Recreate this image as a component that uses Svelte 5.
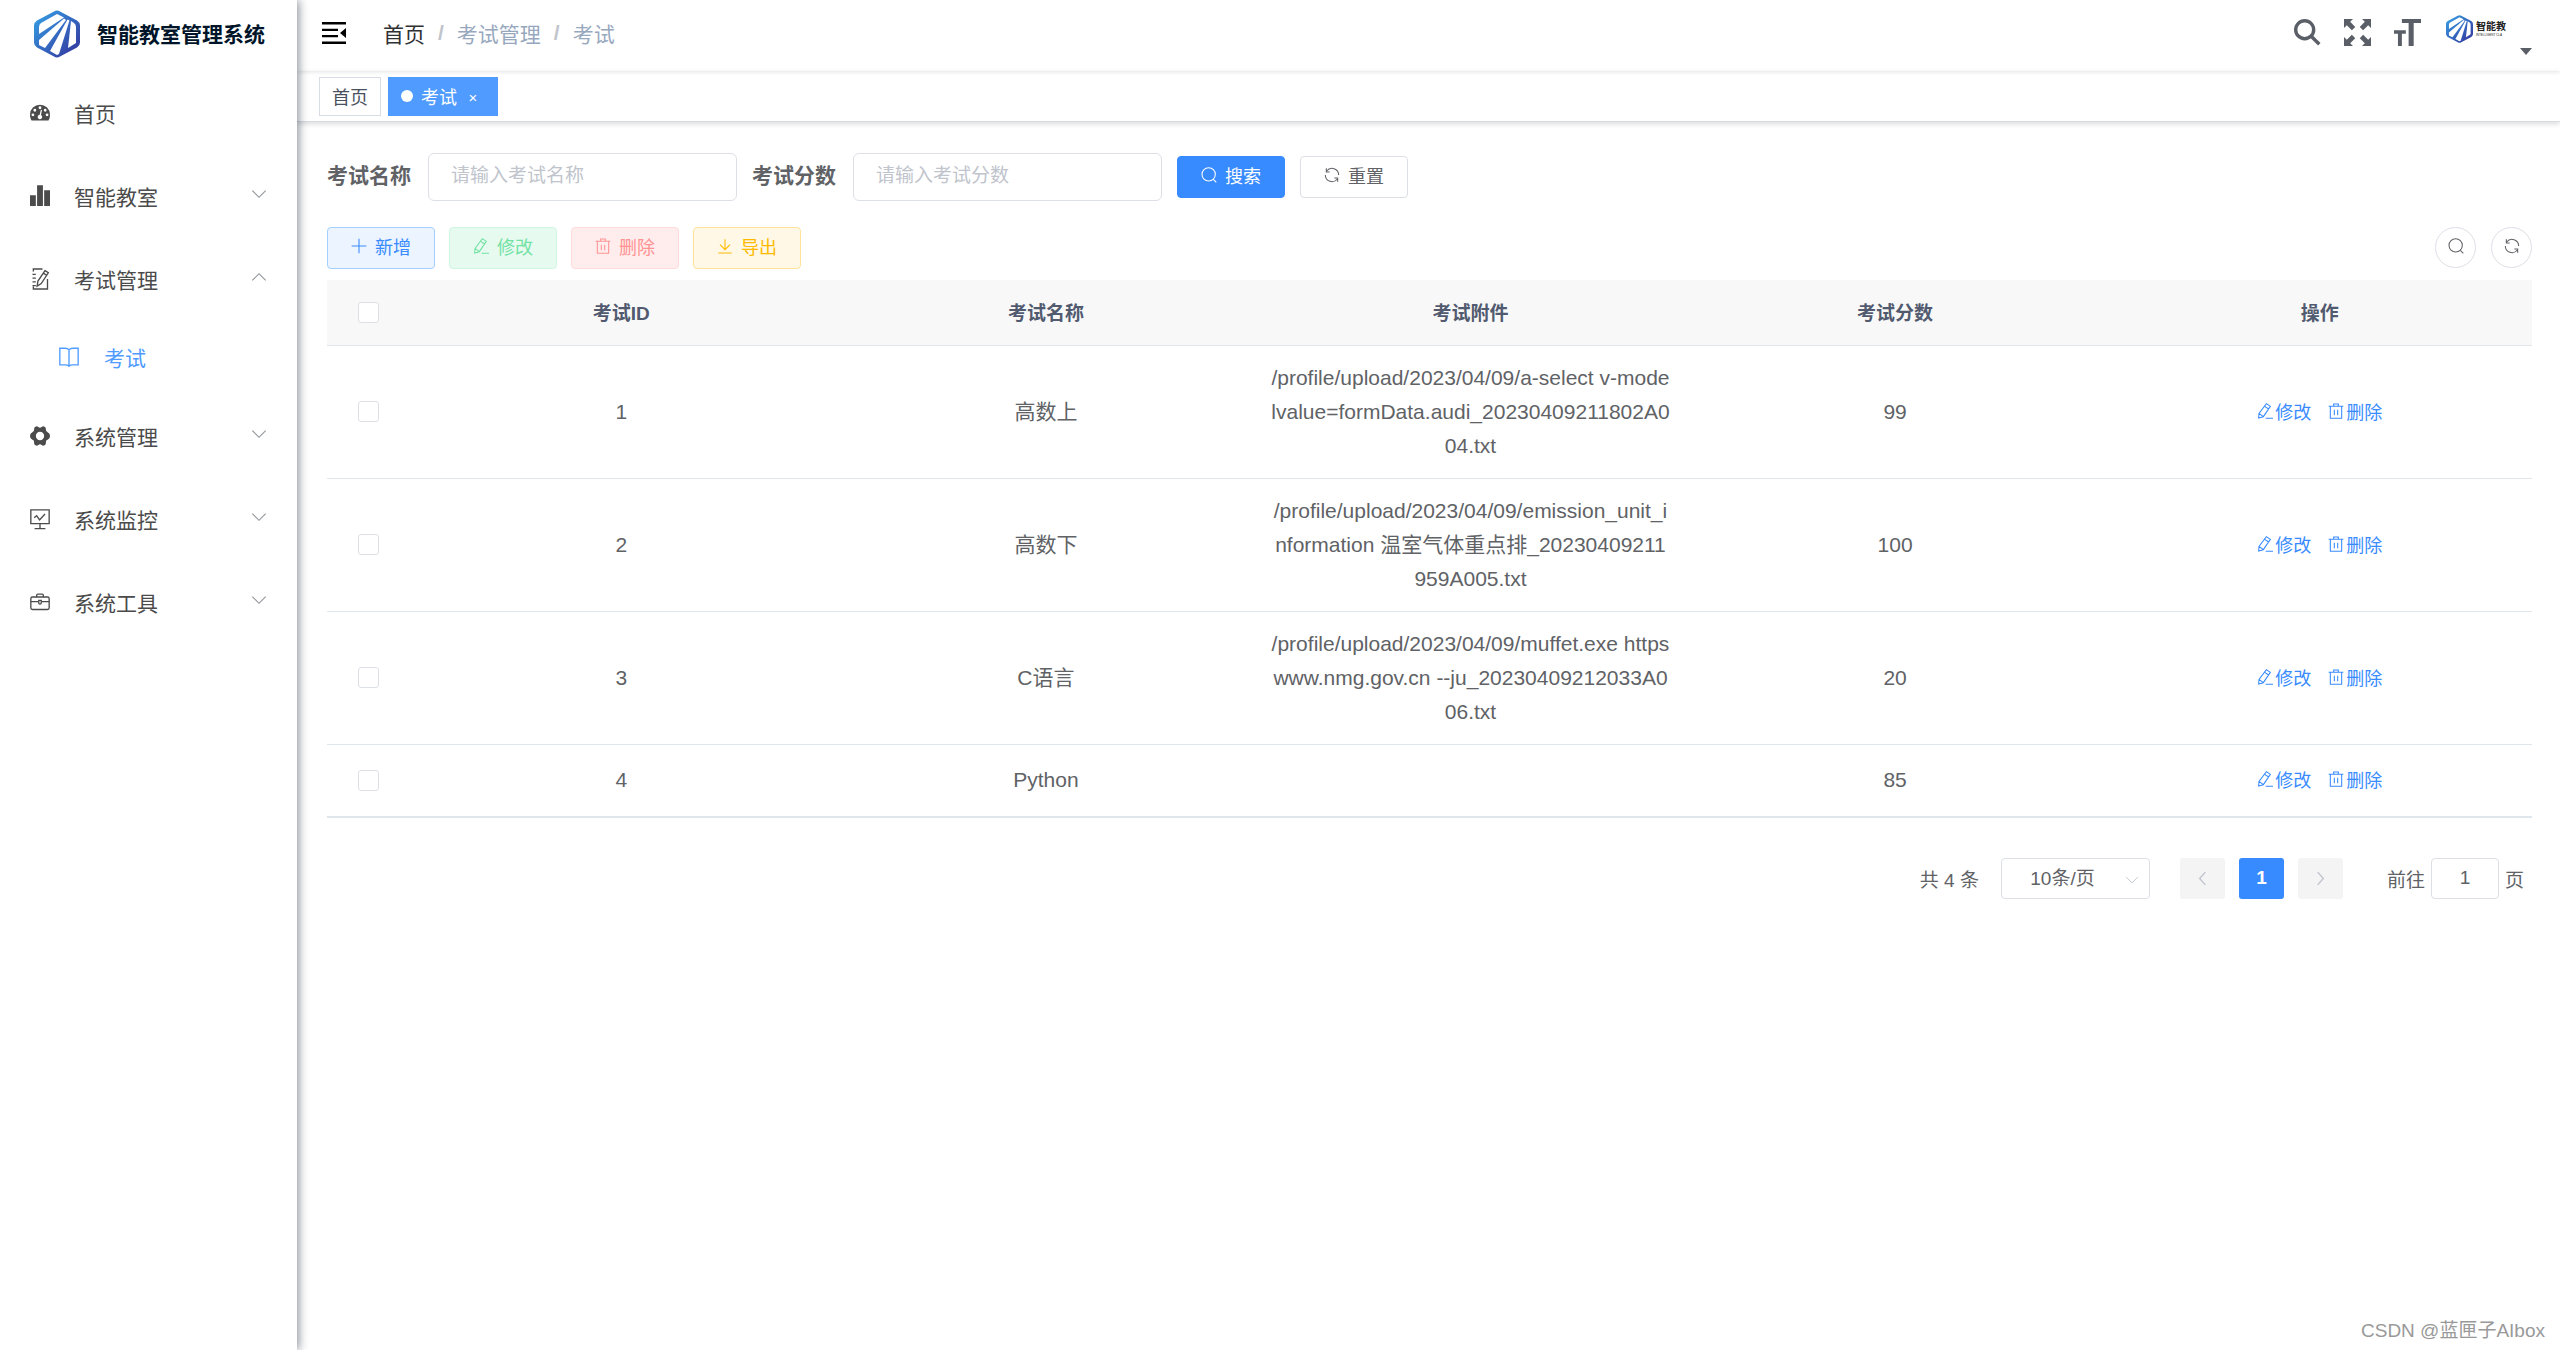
<script>
	const menus = [
		{ label: '首页', icon: 'dashboard' },
		{ label: '智能教室', icon: 'chart', arrow: 'down' },
		{ label: '考试管理', icon: 'note', arrow: 'up', children: [{ label: '考试', icon: 'book' }] },
		{ label: '系统管理', icon: 'gear', arrow: 'down' },
		{ label: '系统监控', icon: 'monitor', arrow: 'down' },
		{ label: '系统工具', icon: 'toolbox', arrow: 'down' }
	];

	const exams = [
		{
			id: 1,
			name: '高数上',
			file: '/profile/upload/2023/04/09/a-select v-modelvalue=formData.audi_20230409211802A004.txt',
			score: 99
		},
		{
			id: 2,
			name: '高数下',
			file: '/profile/upload/2023/04/09/emission_unit_information 温室气体重点排_20230409211959A005.txt',
			score: 100
		},
		{
			id: 3,
			name: 'C语言',
			file: '/profile/upload/2023/04/09/muffet.exe httpswww.nmg.gov.cn --ju_20230409212033A006.txt',
			score: 20
		},
		{ id: 4, name: 'Python', file: '', score: 85 }
	];

	let query = $state({ name: '', score: '' });
	let selected = $state([]);
	let page = $state('1');

	function toggleAll(e) {
		selected = e.currentTarget.checked ? exams.map((exam) => exam.id) : [];
	}

	function reset() {
		query.name = '';
		query.score = '';
	}
</script>

{#snippet icon(name)}
	<svg class="icon {name}" viewBox="0 0 24 24" aria-hidden="true">
		{#if name === 'dashboard'}
			<path
				class="solid"
				fill-rule="evenodd"
				d="M12 2A12 12 0 0 0 0 14c0 2.500.700 5 1.800 7h20.400A13 13 0 0 0 24 14 12 12 0 0 0 12 2zM12 4a1.700 1.700 0 1 1 0 3.400A1.700 1.700 0 0 1 12 4zM5.800 7a1.700 1.700 0 1 1 0 3.400 1.700 1.700 0 0 1 0-3.400zM18.200 7a1.700 1.700 0 1 1 0 3.400 1.700 1.700 0 0 1 0-3.400zM3.500 12.500a1.700 1.700 0 1 1 0 3.400 1.700 1.700 0 0 1 0-3.400zM20.500 12.500a1.700 1.700 0 1 1 0 3.400 1.700 1.700 0 0 1 0-3.400zM13 8l1.400.400-1.200 6a2.700 2.700 0 1 1-1.600-.300z"
			/>
		{:else if name === 'chart'}
			<path class="solid" d="M0 11h7v13H0zM8.500 -1h7v25h-7zM17 5h7V24h-7z" />
		{:else if name === 'note'}
			<path d="M4 3V0h11M4 21v3h17v-12M3 6.500h4M3 11h4M3 15.500h4M3 20h4" />
			<path d="M18 2l4 2.500-8.500 13-5 3 1-6zM16 5l4 2.500" />
		{:else if name === 'book'}
			<path d="M12 3.500C11 2 9 1.500 7 1.500H1v20h6.500c2 0 3.500.500 4.500 1.500 1-1 2.500-1.500 4.500-1.500H23v-20h-6c-2 0-4 .500-5 2zM12 3.500V23" />
		{:else if name === 'gear'}
			<path
				class="solid"
				fill-rule="evenodd"
				d="M6.500.800Q8.500-.300 10 1.300q2 1.500 4 0Q15.500-.300 17.500.800q2 1 1.500 3.200-.200 3 2.500 3.800Q24 8.500 24 12t-2.500 4.200q-2.700.800-2.500 3.800.500 2.200-1.500 3.200-2 1.100-3.500-.500-2-1.500-4 0-1.500 1.600-3.500.500-2-1-1.500-3.200.200-3-2.500-3.800Q0 15.500 0 12t2.500-4.200Q5.200 7 5 4 4.500 1.800 6.500.800zM12 7a5 5 0 1 0 0 10 5 5 0 0 0 0-10z"
			/>
		{:else if name === 'monitor'}
			<path d="M1 1h22v16.500H1zM12 17.500V23M5.500 23.500h13M5 10.500l3-2.500 3.500 5 6.500-7" />
		{:else if name === 'toolbox'}
			<path d="M3 6h18a2 2 0 0 1 2 2v11a2 2 0 0 1-2 2H3a2 2 0 0 1-2-2V8a2 2 0 0 1 2-2zM8 6V4q0-1.500 1.500-1.500h5Q16 2.500 16 4v2M1 11.500h9M14 11.500h9" />
			<path d="M10.500 10h3v3a1.500 1.500 0 0 1-3 0z" />
		{:else if name === 'fold'}
			<path class="solid" d="M0 1h24v2.400H0zM0 7.700h16v2.200H0zM0 14h16v2.200H0zM0 20.600h24V23H0zM24 7v10l-6-5z" />
		{:else if name === 'down'}
			<path d="M2 7l10 10L22 7" />
		{:else if name === 'up'}
			<path d="M2 17L12 7l10 10" />
		{:else if name === 'left'}
			<path d="M16 3L8 12l8 9" />
		{:else if name === 'right'}
			<path d="M8 3l8 9-8 9" />
		{:else if name === 'search'}
			<circle cx="11.500" cy="11" r="10" />
			<path d="M18.500 18.500L23 23" />
		{:else if name === 'refresh'}
			<path d="M2 12a10 10 0 0 0 18 6M22 12A10 10 0 0 0 4 6M3.500 2v5.500h5M20.500 22v-5.500h-5" />
		{:else if name === 'plus'}
			<path d="M12 1v22M1 12h22" />
		{:else if name === 'edit'}
			<path d="M14 1l6 4-10.500 15.500-7 2 .500-7zM11.500 5l6 4M3 15.500l6.500 5M13 23h11" />
		{:else if name === 'trash'}
			<path d="M1 5h22M3.500 5v18h17v-18M8.500 5v-3.500h7v3.500M9.500 10v8.500M14.500 10v8.500" />
		{:else if name === 'download'}
			<path d="M12 2v15M4.500 10l7.500 7.500 7.500-7.500M2 22.500h20" />
		{:else if name === 'find'}
			<circle cx="9.500" cy="9.500" r="8" />
			<path d="M15.500 15.500l7 7" />
		{:else if name === 'full'}
			<path class="solid" d="M0 0h8L5.500 2.500l4.500 4.500-3 3-4.500-4.500L0 8zM24 0v8l-2.500-2.500L17 10l-3-3 4.500-4.500L16 0zM0 24v-8l2.500 2.500L7 14l3 3-4.500 4.500L8 24zM24 24h-8l2.500-2.500L14 17l3-3 4.500 4.500L24 16z" />
		{:else if name === 'size'}
			<path class="solid" d="M7 0h17v3.500h-6.500V24H13V3.500H7zM0 10h10.500v3H7v11H3.500V13H0z" />
		{/if}
	</svg>
{/snippet}

{#snippet logo(id)}
	<svg class="mark" viewBox="0 0 46 48" aria-hidden="true">
		<defs>
			<linearGradient id="mark-{id}" x1="0" y1="0" x2="1" y2="1">
				<stop offset="0" stop-color="#35a4e8" />
				<stop offset="1" stop-color="#34309a" />
			</linearGradient>
		</defs>
		<path
			fill="url(#mark-{id})"
			d="M20 1.500q3-2 6 0l17 9q3 2 3 5v17q0 3-3 5l-17 9q-3 2-6 0l-17-9q-3-2-3-5v-17q0-3 3-5z"
		/>
		<g fill="#fff">
			<path d="M23 4l7 3.500L5 24v-7q0-2.500 2-4z" />
			<path d="M30 8.500l2 1.500L11 38l-6-3v-5z" />
			<path d="M33.500 9.500l2 1L25 44l-2 1-7-4z" />
			<path d="M37 11l3 2q2 1.500 2 4v16l-8 5z" />
		</g>
	</svg>
{/snippet}

<div class="layout">
	<aside>
		<a class="brand" href="#/">
			{@render logo('side')}
			<h1>智能教室管理系统</h1>
		</a>
		<nav>
			{#each menus as menu}
				<a class="item" href="#/">
					{@render icon(menu.icon)}
					<span>{menu.label}</span>
					{#if menu.arrow}{@render icon(menu.arrow)}{/if}
				</a>
				{#each menu.children ?? [] as child}
					<a class="item child" href="#/">
						{@render icon(child.icon)}
						<span>{child.label}</span>
					</a>
				{/each}
			{/each}
		</nav>
	</aside>

	<div class="main">
		<header>
			<button class="tool fold-btn" aria-label="收起菜单">{@render icon('fold')}</button>
			<div class="crumbs">
				<a href="#/">首页</a><i>/</i><span>考试管理</span><i>/</i><span>考试</span>
			</div>
			<div class="tools">
				<button class="tool" aria-label="搜索菜单">{@render icon('find')}</button>
				<button class="tool" aria-label="全屏">{@render icon('full')}</button>
				<button class="tool" aria-label="布局大小">{@render icon('size')}</button>
				<button class="tool avatar" aria-label="用户">
					{@render logo('user')}
					<span class="avatar-text">智能教<small>INTELLIGENT CLA</small></span>
					<span class="caret"></span>
				</button>
			</div>
		</header>

		<div class="tags">
			<a class="tag" href="#/">首页</a>
			<a class="tag active" href="#/"><span class="dot"></span>考试<span class="close">×</span></a>
		</div>

		<main>
			<form class="search-form" onsubmit={(e) => e.preventDefault()}>
				<div class="field">
					<label for="exam-name">考试名称</label>
					<input id="exam-name" placeholder="请输入考试名称" bind:value={query.name} />
				</div>
				<div class="field">
					<label for="exam-score">考试分数</label>
					<input id="exam-score" placeholder="请输入考试分数" bind:value={query.score} />
				</div>
				<button class="btn solid-btn">{@render icon('search')}搜索</button>
				<button class="btn" type="button" onclick={reset}>{@render icon('refresh')}重置</button>
			</form>

			<div class="actions">
				<button class="btn add">{@render icon('plus')}新增</button>
				<button class="btn modify" disabled={selected.length !== 1}>{@render icon('edit')}修改</button>
				<button class="btn remove" disabled={selected.length === 0}>{@render icon('trash')}删除</button>
				<button class="btn export">{@render icon('download')}导出</button>
				<div class="round">
					<button class="btn" aria-label="隐藏搜索">{@render icon('search')}</button>
					<button class="btn" aria-label="刷新">{@render icon('refresh')}</button>
				</div>
			</div>

			<table>
				<thead>
					<tr>
						<th class="check">
							<input
								type="checkbox"
								aria-label="全选"
								checked={selected.length === exams.length}
								onchange={toggleAll}
							/>
						</th>
						<th>考试ID</th>
						<th>考试名称</th>
						<th>考试附件</th>
						<th>考试分数</th>
						<th>操作</th>
					</tr>
				</thead>
				<tbody>
					{#each exams as exam (exam.id)}
						<tr>
							<td class="check">
								<input type="checkbox" aria-label={exam.name} value={exam.id} bind:group={selected} />
							</td>
							<td>{exam.id}</td>
							<td>{exam.name}</td>
							<td>{exam.file}</td>
							<td>{exam.score}</td>
							<td>
								<div class="ops">
									<button>{@render icon('edit')}修改</button>
									<button>{@render icon('trash')}删除</button>
								</div>
							</td>
						</tr>
					{/each}
				</tbody>
			</table>

			<div class="pager">
				<span class="total">共 {exams.length} 条</span>
				<div class="size-box">
					<select aria-label="每页条数">
						<option>10条/页</option>
						<option>20条/页</option>
						<option>50条/页</option>
					</select>
					{@render icon('down')}
				</div>
				<div class="pages">
					<button disabled aria-label="上一页">{@render icon('left')}</button>
					<button class="current">1</button>
					<button disabled aria-label="下一页">{@render icon('right')}</button>
				</div>
				<label class="jump">前往<input bind:value={page} />页</label>
			</div>
		</main>
	</div>
	<span class="watermark">CSDN @蓝匣子AIbox</span>
</div>

<style>
	.layout {
		display: flex;
		min-height: 100vh;
		position: relative;
		background: #fff;
		color: #606266;
		font-family: 'Liberation Sans', 'Noto Sans CJK SC', sans-serif;
		font-size: 21px;
	}

	a {
		color: inherit;
		text-decoration: none;
	}

	button,
	input,
	select {
		font-family: inherit;
		color: inherit;
		box-sizing: border-box;
		margin: 0;
	}

	button {
		cursor: pointer;
	}

	button:disabled {
		cursor: not-allowed;
	}

	.icon {
		width: 18px;
		height: 18px;
		flex: none;
		fill: none;
		stroke: currentColor;
		stroke-width: 1.6;
		overflow: visible;
	}

	.icon .solid {
		fill: currentColor;
		stroke: none;
	}

	/* sidebar */
	aside {
		width: 297px;
		flex: none;
		z-index: 2;
		background: #fff;
		box-shadow: 2px 0 9px rgba(0, 21, 41, 0.45);
	}

	.brand {
		display: flex;
		align-items: center;
		height: 71px;
		padding: 0 0 4px 34px;
		box-sizing: border-box;
		gap: 17px;
	}

	.mark {
		width: 46px;
		height: 48px;
		flex: none;
	}

	h1 {
		margin: 0;
		padding-bottom: 2px;
		font-size: 21px;
		font-weight: 700;
		color: #001529;
		white-space: nowrap;
	}

	.item {
		display: flex;
		align-items: center;
		height: 83px;
		padding: 0 30px;
		gap: 24px;
		color: #4b4b4b;
	}

	.item span {
		flex: 1;
	}

	.item .icon {
		width: 20px;
		height: 20px;
	}

	.item .down,
	.item .up {
		width: 16px;
		height: 16px;
		margin-bottom: 4px;
		color: #909399;
	}

	.child {
		height: 74px;
		padding-left: 59px;
		gap: 25px;
		color: #4f9bff;
	}

	/* top bar */
	.main {
		flex: 1;
		min-width: 0;
	}

	header {
		display: flex;
		align-items: center;
		height: 71px;
		padding: 0 28px 6px 25px;
		box-sizing: border-box;
		box-shadow: 0 1px 4px rgba(0, 21, 41, 0.12);
	}

	.tool {
		display: flex;
		padding: 0;
		border: none;
		background: none;
		color: #5a5e66;
	}

	.tool .icon {
		width: 27px;
		height: 27px;
		stroke-width: 3;
	}

	.fold-btn {
		color: #000;
	}

	.fold-btn .icon {
		width: 24px;
		height: 24px;
	}

	.crumbs {
		display: flex;
		align-items: center;
		margin-left: 37px;
		color: #97a8be;
	}

	.crumbs a {
		color: #303133;
	}

	.crumbs i {
		margin: 0 13px;
		font-style: normal;
		font-weight: 700;
		color: #c0c4cc;
	}

	.tools {
		display: flex;
		align-items: center;
		gap: 23px;
		margin-left: auto;
	}

	.avatar {
		align-items: center;
		height: 58px;
		margin-left: 2px;
		color: #222;
	}

	.avatar .mark {
		width: 27px;
		height: 30px;
		margin-bottom: 8px;
	}

	.avatar-text {
		display: flex;
		flex-direction: column;
		width: 30px;
		margin: 0 14px 8px 3px;
		font-size: 10px;
		font-weight: 700;
		line-height: 12px;
		text-align: left;
		white-space: nowrap;
	}

	.avatar-text small {
		font-size: 3px;
		line-height: 4px;
		font-weight: 400;
	}

	.caret {
		align-self: flex-end;
		margin-bottom: 7px;
		border: 6px solid transparent;
		border-top: 7px solid #5a5e66;
		border-bottom: none;
	}

	/* visited pages */
	.tags {
		display: flex;
		gap: 7px;
		height: 51px;
		padding: 6px 22px;
		box-sizing: border-box;
		border-bottom: 1px solid #d8dce5;
		box-shadow: 0 2px 5px rgba(0, 0, 0, 0.14);
	}

	.tag {
		display: flex;
		align-items: center;
		height: 39px;
		padding: 0 12px 2px;
		box-sizing: border-box;
		border: 1px solid #d8dce5;
		font-size: 18px;
		color: #495060;
	}

	.tag.active {
		background: #4f9bff;
		border-color: #4f9bff;
		color: #fff;
	}

	.dot {
		width: 12px;
		height: 12px;
		margin-right: 8px;
		border-radius: 50%;
		background: #fff;
	}

	.close {
		width: 22px;
		margin: 4px 1px 0 5px;
		text-align: center;
		font-size: 15px;
	}

	/* query form */
	main {
		padding: 31px 28px 31px 30px;
	}

	.search-form {
		display: flex;
		align-items: center;
		gap: 15px;
	}

	.field {
		display: flex;
		align-items: center;
		gap: 17px;
	}

	.field label {
		padding-bottom: 6px;
		font-weight: 700;
	}

	.field input {
		width: 309px;
		height: 48px;
		padding: 0 22px 2px;
		border: 1px solid #dcdfe6;
		border-radius: 6px;
		font-size: 19px;
		outline: none;
	}

	.field input::placeholder {
		color: #c0c4cc;
	}

	.btn {
		display: flex;
		align-items: center;
		justify-content: center;
		gap: 8px;
		width: 108px;
		height: 42px;
		padding: 0 0 4px;
		border: 1px solid #dcdfe6;
		border-radius: 4px;
		background: #fff;
		font-size: 18px;
	}

	.btn .icon {
		width: 16px;
		height: 16px;
	}

	.solid-btn {
		background: #388bff;
		border-color: #388bff;
		color: #fff;
	}

	.actions {
		display: flex;
		gap: 14px;
		margin: 26px 0 11px;
	}

	.add {
		background: #ebf4ff;
		border-color: #a3d0fd;
		color: #388bff;
	}

	.modify {
		background: #e7faf0;
		border-color: #d0f5e0;
		color: #71e2a3;
	}

	.remove {
		background: #ffeded;
		border-color: #ffdbdb;
		color: #ff9292;
	}

	.export {
		background: #fff8e6;
		border-color: #ffe399;
		color: #ffba00;
	}

	.round {
		display: flex;
		gap: 15px;
		margin-left: auto;
	}

	.round .btn {
		width: 41px;
		height: 41px;
		border-radius: 50%;
	}

	/* exam list */
	table {
		width: 100%;
		table-layout: fixed;
		border-collapse: collapse;
		border-bottom: 2px solid #dfe6ec;
		text-align: center;
	}

	th {
		height: 65px;
		padding: 0 0 1px;
		box-sizing: border-box;
		background: #f8f8f9;
		border-bottom: 1px solid #dfe6ec;
		font-size: 19px;
		color: #515a6e;
	}

	td {
		padding: 15px 12px;
		border-bottom: 1px solid #dfe6ec;
		line-height: 34px;
		word-break: break-all;
	}

	.check {
		width: 82px;
		padding: 0;
	}

	input[type='checkbox'] {
		appearance: none;
		display: block;
		width: 21px;
		height: 21px;
		margin: 0 auto;
		border: 1px solid #dcdfe6;
		border-radius: 3px;
		background: #fff;
	}

	input[type='checkbox']:checked {
		background: #388bff;
		border-color: #388bff;
	}

	.ops {
		display: flex;
		justify-content: center;
		align-items: center;
		gap: 17px;
		min-height: 41px;
	}

	.ops button {
		display: flex;
		align-items: center;
		gap: 2px;
		padding: 0 0 2px;
		border: none;
		background: none;
		font-size: 18px;
		color: #388bff;
	}

	.ops .icon {
		width: 16px;
		height: 16px;
	}

	/* pagination */
	.pager {
		display: flex;
		justify-content: flex-end;
		align-items: center;
		margin-top: 40px;
		padding-right: 8px;
		font-size: 19px;
	}

	.size-box {
		position: relative;
		margin: 0 30px 0 22px;
	}

	.size-box select {
		appearance: none;
		width: 149px;
		height: 41px;
		padding: 0 26px 0 0;
		border: 1px solid #dcdfe6;
		border-radius: 4px;
		background: #fff;
		font-size: 19px;
		text-align: center;
		text-align-last: center;
	}

	.size-box .icon {
		position: absolute;
		right: 11px;
		top: 15px;
		width: 14px;
		height: 14px;
		color: #c0c4cc;
		pointer-events: none;
	}

	.pages {
		display: flex;
		gap: 14px;
	}

	.pages button {
		display: flex;
		align-items: center;
		justify-content: center;
		width: 45px;
		height: 41px;
		padding: 0;
		border: none;
		border-radius: 3px;
		background: #f4f4f5;
		font-size: 19px;
		font-weight: 700;
		color: #c0c4cc;
	}

	.pages .icon {
		width: 17px;
		height: 17px;
		stroke-width: 2;
	}

	.pages .current {
		background: #388bff;
		color: #fff;
	}

	.jump {
		display: flex;
		align-items: center;
		gap: 6px;
		margin-left: 44px;
	}

	.jump input {
		width: 68px;
		height: 41px;
		padding: 0;
		border: 1px solid #dcdfe6;
		border-radius: 4px;
		font-size: 19px;
		text-align: center;
	}

	.watermark {
		position: absolute;
		right: 15px;
		bottom: 8px;
		font-size: 19px;
		color: #999;
	}
</style>
